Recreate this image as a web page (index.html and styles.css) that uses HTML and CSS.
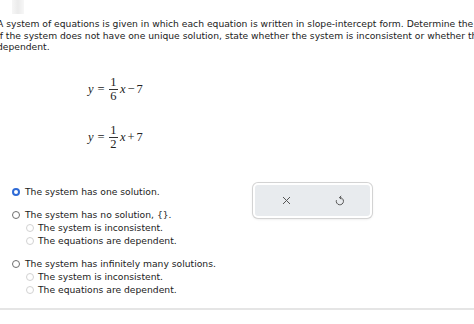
FILE: index.html
```html
<!DOCTYPE html>
<html>
<head>
<meta charset="utf-8">
<link rel="stylesheet" href="styles.css">
</head>
<body>
<div class="corner"></div>
<p class="prompt">
<span class="line">A system of equations is given in which each equation is written in slope-intercept form. Determine the number of solutions.</span>
<span class="line">If the system does not have one unique solution, state whether the system is inconsistent or whether the equations are</span>
<span class="line">dependent.</span>
</p>

<div class="equations">
  <div class="eq">
    <i class="var">y</i><span class="op">=</span><span class="frac"><span class="num">1</span><span class="den">6</span></span><i class="var">x</i><span class="bin">−</span><span>7</span>
  </div>
  <div class="eq">
    <i class="var">y</i><span class="op">=</span><span class="frac"><span class="num">1</span><span class="den">2</span></span><i class="var">x</i><span class="bin">+</span><span>7</span>
  </div>
</div>

<div class="answer">
  <div class="options">
    <div class="group">
      <div class="row"><span class="radio selected"></span><span>The system has one solution.</span></div>
    </div>
    <div class="group">
      <div class="row"><span class="radio"></span><span>The system has no solution, {}.</span></div>
      <div class="row sub"><span class="radio faint"></span><span>The system is inconsistent.</span></div>
      <div class="row sub"><span class="radio faint"></span><span>The equations are dependent.</span></div>
    </div>
    <div class="group">
      <div class="row"><span class="radio"></span><span>The system has infinitely many solutions.</span></div>
      <div class="row sub"><span class="radio faint"></span><span>The system is inconsistent.</span></div>
      <div class="row sub"><span class="radio faint"></span><span>The equations are dependent.</span></div>
    </div>
  </div>
  <div class="panel">
    <span class="icon">
      <svg width="9" height="9" viewBox="0 0 9 9"><path d="M1 1 L8 8 M8 1 L1 8" stroke="#555" stroke-width="1" fill="none"/></svg>
    </span>
    <span class="icon">
      <svg width="10" height="11" viewBox="0 0 10 11"><path d="M4.6 2.6 A3.6 3.6 0 1 1 1.4 5.2" stroke="#555" stroke-width="1" fill="none"/><path d="M6.2 0.9 L4.4 2.6 L6.2 4.2" stroke="#555" stroke-width="1" fill="none"/></svg>
    </span>
  </div>
</div>

<div class="divider"></div>
</body>
</html>
```

FILE: styles.css
```css
html, body {
  margin: 0;
  padding: 0;
  background: #fff;
}
body {
  width: 474px;
  height: 324px;
  overflow: hidden;
  position: relative;
  font-family: "DejaVu Sans", Verdana, sans-serif;
  font-size: 9.2px;
  color: #222;
}
.corner {
  position: absolute;
  left: 12px;
  top: 0;
  width: 12px;
  height: 14px;
  background: linear-gradient(to right, #f6f6f6, #ebebeb 50%, #f7f7f7);
}
.prompt {
  margin: 18px 0 0 -3px;
  line-height: 11.5px;
  white-space: nowrap;
}
.line {
  display: block;
}
.equations {
  margin-top: 22.5px;
  padding-left: 88px;
  display: flex;
  flex-direction: column;
  gap: 20px;
  font-family: "Liberation Serif", "Times New Roman", serif;
  font-size: 12.5px;
  color: #222;
}
.eq {
  display: flex;
  align-items: center;
  height: 28px;
}
.var {
  font-style: italic;
}
.op {
  margin: 0 4px 0 4px;
}
.bin {
  margin: 0 2px;
}
.frac {
  display: inline-flex;
  flex-direction: column;
  align-items: center;
  margin: 0 2px 0 0;
}
.num, .den {
  line-height: 13px;
  padding: 0 1.5px;
}
.num {
  border-bottom: 1px solid #333;
}
.answer {
  display: flex;
  align-items: flex-start;
  margin-top: 24.5px;
}
.options {
  width: 241px;
  padding-left: 12px;
  padding-top: 9.5px;
}
.group + .group {
  margin-top: 10px;
}
.row {
  display: flex;
  align-items: center;
  height: 13px;
  gap: 5px;
}
.row.sub {
  padding-left: 14px;
  gap: 4px;
}
.radio {
  box-sizing: border-box;
  width: 8px;
  height: 8px;
  border-radius: 50%;
  border: 1px solid #6e6e6e;
  background: #fff;
  flex: none;
}
.radio.selected {
  border: 2.5px solid #2f6bd6;
}
.radio.faint {
  border-color: #d2d2d2;
}
.panel {
  box-sizing: border-box;
  width: 119px;
  height: 35px;
  margin-top: 7px;
  border: 2px solid #fff;
  border-radius: 5px;
  background: #e8ebee;
  box-shadow: 0 0 0 1px #d3d3d3, 0 1px 3px rgba(0,0,0,0.12);
  display: flex;
  align-items: center;
  padding: 0 25px 0 26px;
  justify-content: space-between;
}
.icon {
  display: flex;
  align-items: center;
  justify-content: center;
  width: 10px;
  height: 11px;
}
.divider {
  margin-top: 11.5px;
  height: 2px;
  background: #e5e5e5;
}
```
